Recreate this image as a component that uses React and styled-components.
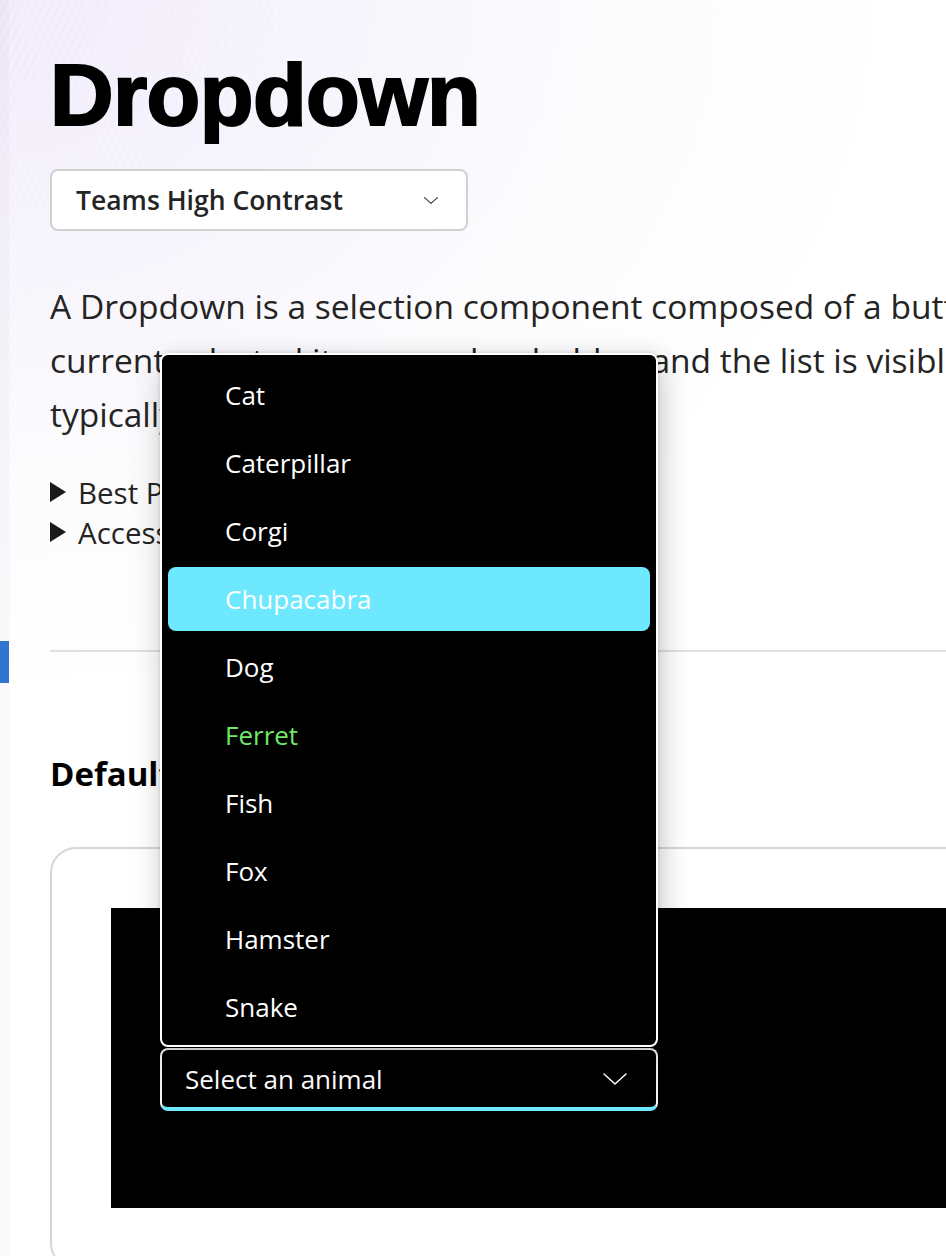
import React from 'react'
import styled, { createGlobalStyle } from 'styled-components';

const GlobalStyle = createGlobalStyle`
    html, body {
        margin: 0;
        padding: 0;
        overflow: hidden;
        background: #ffffff;
    }
    body {
        font-family: "Open Sans", "Noto Sans", sans-serif;
        color: #242424;
    }
`;

const Page = styled.div`
    display: flex;
    width: 946px;
    height: 1256px;
    overflow: hidden;
    background:
        repeating-linear-gradient(115deg, rgba(255, 255, 255, 0) 0px, rgba(255, 255, 255, 0.25) 3px, rgba(255, 255, 255, 0) 7px),
        radial-gradient(ellipse 900px 700px at 0% 0%, #efe9fa 0%, #f6f3fc 35%, #fbfafd 65%, #ffffff 100%);
`;

const Rail = styled.div`
    flex: 0 0 9px;
    background-color: rgba(90, 70, 140, 0.03);
    padding-top: 641px;
`;

const RailMark = styled.div`
    height: 42px;
    background-color: #2f74d1;
`;

const Main = styled.main`
    flex: 0 0 1200px;
    padding: 51px 0 0 41px;
`;

const Title = styled.h1`
    margin: 0;
    font-family: "Liberation Sans", Arial, sans-serif;
    font-weight: 700;
    font-size: 88px;
    line-height: 88px;
    letter-spacing: -0.6px;
    color: #000;
    -webkit-text-stroke: 2.2px #000;
`;

const ThemeSelect = styled.button`
    margin-top: 30px;
    width: 418px;
    height: 62px;
    display: flex;
    align-items: center;
    justify-content: space-between;
    padding: 0 28px 0 24px;
    border: 2px solid #d1d1d1;
    border-radius: 8px;
    background: #fff;
    font-family: "Open Sans", sans-serif;
    font-weight: 600;
    font-size: 26.5px;
    color: #242424;
    cursor: pointer;
`;

const Description = styled.p`
    margin: 48px 0 0;
    font-size: 33.5px;
    line-height: 54px;
    white-space: nowrap;
    color: #242424;
`;

const Disclosures = styled.div`
    margin-top: 31px;
    display: flex;
    flex-direction: column;
`;

const Summary = styled.div`
    display: flex;
    align-items: center;
    gap: 12px;
    height: 40px;
    font-size: 29.5px;
    color: #242424;
`;

const Triangle = styled.span`
    flex: none;
    width: 0;
    height: 0;
    border-left: 16px solid #1a1a1a;
    border-top: 10px solid transparent;
    border-bottom: 10px solid transparent;
`;

const Divider = styled.hr`
    margin: 98px 0 0;
    border: none;
    height: 2px;
    background-color: #e0e0e0;
`;

const SectionTitle = styled.h2`
    margin: 100px 0 0;
    font-size: 33px;
    line-height: 44px;
    font-weight: 700;
    color: #000;
`;

const Card = styled.section`
    margin-top: 51px;
    border: 2px solid #d6d6d6;
    border-radius: 26px;
    padding: 59px;
    background: #fff;
`;

const Canvas = styled.div`
    background-color: #000;
    padding: 96px 0 97px 49px;
`;

const Field = styled.div`
    position: relative;
    width: 498px;
    display: flex;
    flex-direction: column;
    gap: 4px;
`;

const Label = styled.label`
    height: 40px;
    display: flex;
    align-items: center;
    font-size: 26px;
    color: #fff;
`;

const Trigger = styled.button`
    height: 63px;
    display: flex;
    align-items: center;
    justify-content: space-between;
    padding: 0 29px 0 23px;
    background: #000;
    border: 2px solid #f2f2f2;
    border-bottom: 4px solid #6ee8ff;
    border-radius: 8px;
    font-family: "Open Sans", sans-serif;
    font-size: 26px;
    color: #fff;
    cursor: pointer;
`;

const Listbox = styled.div`
    position: absolute;
    left: 0;
    right: 0;
    bottom: calc(100% - 43px);
    z-index: 10;
    display: flex;
    flex-direction: column;
    gap: 4px;
    padding: 8px 6px 6px;
    background-color: #000;
    border: 2px solid #fff;
    border-radius: 8px;
    box-shadow: 0 0 4px rgba(0, 0, 0, 0.14), 0 16px 32px rgba(0, 0, 0, 0.16), 8px 0 24px rgba(0, 0, 0, 0.08);
`;

const Option = styled.div`
    height: 64px;
    display: flex;
    align-items: center;
    padding-left: 57px;
    border-radius: 8px;
    font-size: 26px;
    color: ${({selected}) => selected ? '#6fe86a' : '#fff'};
    background-color: ${({active}) => active ? '#6ee8ff' : 'transparent'};
`;

const animals = ['Cat', 'Caterpillar', 'Corgi', 'Chupacabra', 'Dog', 'Ferret', 'Fish', 'Fox', 'Hamster', 'Snake'];

function Chevron({size, color, stroke}) {
    return (
        <svg width={size} height={size / 2} viewBox="0 0 24 12" fill="none">
            <path d="M1 1 L12 11 L23 1" stroke={color} strokeWidth={stroke} strokeLinecap="round" strokeLinejoin="round" />
        </svg>
    );
}

export default function App() {
    return (
        <>
            <GlobalStyle />
            <Page>
                <Rail>
                    <RailMark />
                </Rail>
                <Main>
                    <Title>Dropdown</Title>
                    <ThemeSelect>
                        Teams High Contrast
                        <Chevron size={14} color="#424242" stroke={2} />
                    </ThemeSelect>
                    <Description>
                        A Dropdown is a selection component composed of a button and a list of options. The button displays the<br />
                        current selected items or placeholder, and the list is visible on demand by clicking the button. Dropdowns are<br />
                        typically used in forms.
                    </Description>
                    <Disclosures>
                        <Summary><Triangle />Best Practices</Summary>
                        <Summary><Triangle />Accessibility</Summary>
                    </Disclosures>
                    <Divider />
                    <SectionTitle>Default</SectionTitle>
                    <Card>
                        <Canvas>
                            <Field>
                                <Label>Best pet</Label>
                                <Trigger>
                                    Select an animal
                                    <Chevron size={24} color="#fff" stroke={1.6} />
                                </Trigger>
                                <Listbox>
                                    {animals.map(name => (
                                        <Option key={name} active={name === 'Chupacabra'} selected={name === 'Ferret'}>
                                            {name}
                                        </Option>
                                    ))}
                                </Listbox>
                            </Field>
                        </Canvas>
                    </Card>
                </Main>
            </Page>
        </>
    );
}
